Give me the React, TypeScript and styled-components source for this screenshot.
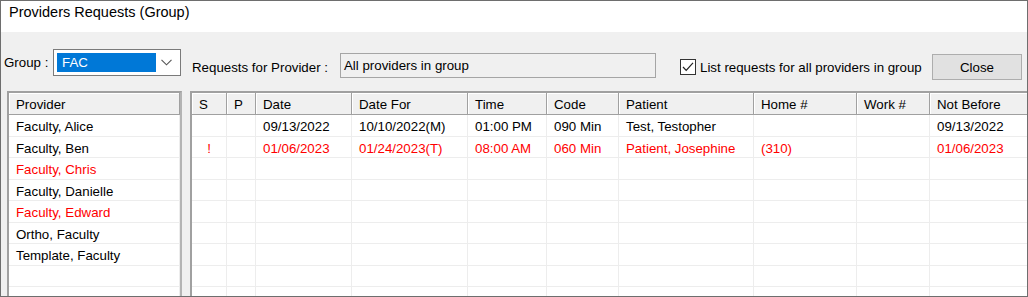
import React from 'react';
import styled, { createGlobalStyle } from 'styled-components';

const Global = createGlobalStyle`
  html, body { margin: 0; padding: 0; background: #f0f0f0; overflow: hidden; }
  body { font-family: "Liberation Sans", Arial, sans-serif; font-size: 13.3px; color: #000; }
  * { box-sizing: border-box; }
`;

const Window = styled.div`
  width: 1028px;
  height: 297px;
  border: 1px solid #6e6e6e;
  background: #f0f0f0;
  display: flex;
  flex-direction: column;
  overflow: hidden;
`;

const TitleBar = styled.div`
  flex: 0 0 31px;
  background: #fff;
  padding: 3px 0 0 8px;
  font-size: 14.5px;
  line-height: 17px;
`;

const Toolbar = styled.div`
  flex: 0 0 59px;
  display: flex;
  align-items: flex-start;
  padding: 17px 5px 0 3px;
`;

const Label = styled.div<{ $top: number; $width?: number; $left?: number }>`
  margin-top: ${(p) => p.$top}px;
  margin-left: ${(p) => p.$left ?? 0}px;
  ${(p) => (p.$width ? `width: ${p.$width}px;` : '')}
  line-height: 16px;
  white-space: nowrap;
`;

const Combo = styled.div`
  width: 128px;
  height: 27px;
  border: 1px solid #7a7a7a;
  background: #fff;
  padding: 3px;
  display: flex;
`;

const ComboValue = styled.div`
  width: 99px;
  height: 19px;
  background: #0078d7;
  color: #fff;
  padding: 1px 0 0 5px;
  line-height: 18px;
`;

const ComboArrow = styled.div`
  flex: 1;
  display: flex;
  align-items: center;
  justify-content: center;
`;

const TextBox = styled.div`
  width: 316px;
  height: 25px;
  margin-top: 4px;
  border: 1px solid #a5a5a5;
  background: #f0f0f0;
  padding: 2px 0 0 3px;
  line-height: 20px;
`;

const CheckBox = styled.div`
  width: 16px;
  height: 16px;
  margin: 10px 0 0 24px;
  border: 1px solid #333;
  background: #fff;
  display: flex;
  align-items: center;
  justify-content: center;
`;

const Button = styled.div`
  width: 90px;
  height: 26px;
  margin: 5px 0 0 auto;
  border: 1px solid #adadad;
  background: #e1e1e1;
  display: flex;
  align-items: center;
  justify-content: center;
`;

const Panels = styled.div`
  flex: 1;
  display: flex;
  gap: 8px;
  padding-left: 6px;
  margin-right: -6px;
  min-height: 0;
`;

const Panel = styled.div<{ $width?: number }>`
  ${(p) => (p.$width ? `flex: 0 0 ${p.$width}px;` : 'flex: 1;')}
  height: 220px;
  border: 2px solid;
  border-color: #a0a0a0 #b4b4b4 #b4b4b4 #a0a0a0;
  background: #fff;
  overflow: hidden;
`;

const Row = styled.div<{ $cols: string; $header?: boolean; $red?: boolean }>`
  display: grid;
  grid-template-columns: ${(p) => p.$cols};
  height: ${(p) => (p.$header ? '22px' : '21.5px')};
  color: ${(p) => (p.$red ? '#ff0000' : '#000')};
`;

const HeadCell = styled.div`
  background: #f0f0f0;
  border-right: 1px solid #a0a0a0;
  border-bottom: 1px solid #a0a0a0;
  box-shadow: inset 1px 1px #ffffff;
  padding: 2px 0 0 7px;
  line-height: 19px;
  white-space: nowrap;
  overflow: hidden;
`;

const Cell = styled.div<{ $center?: boolean }>`
  border-right: 1px solid #ededed;
  border-bottom: 1px solid #ededed;
  padding: 2px 0 0 ${(p) => (p.$center ? 0 : 7)}px;
  text-align: ${(p) => (p.$center ? 'center' : 'left')};
  line-height: 19px;
  white-space: nowrap;
  overflow: hidden;
`;

const gridCols = '35px 29px 96px 116px 79px 72px 135px 103px 73px 100px';
const gridHeads = ['S', 'P', 'Date', 'Date For', 'Time', 'Code', 'Patient', 'Home #', 'Work #', 'Not Before'];

const requests: { cells: string[]; red?: boolean }[] = [
  { cells: ['', '', '09/13/2022', '10/10/2022(M)', '01:00 PM', '090 Min', 'Test, Testopher', '', '', '09/13/2022'] },
  { cells: ['!', '', '01/06/2023', '01/24/2023(T)', '08:00 AM', '060 Min', 'Patient, Josephine', '(310)', '', '01/06/2023'], red: true },
];

const providers: { name: string; red?: boolean }[] = [
  { name: 'Faculty, Alice' },
  { name: 'Faculty, Ben' },
  { name: 'Faculty, Chris', red: true },
  { name: 'Faculty, Danielle' },
  { name: 'Faculty, Edward', red: true },
  { name: 'Ortho, Faculty' },
  { name: 'Template, Faculty' },
];

const TOTAL_ROWS = 9;

export default function App() {
  const providerRows = [...providers];
  while (providerRows.length < TOTAL_ROWS) providerRows.push({ name: '' });
  const requestRows = [...requests];
  while (requestRows.length < TOTAL_ROWS) requestRows.push({ cells: gridHeads.map(() => '') });

  return (
    <>
      <Global />
      <Window>
        <TitleBar>Providers Requests (Group)</TitleBar>
        <Toolbar>
          <Label $top={6} $width={49}>Group :</Label>
          <Combo>
            <ComboValue>FAC</ComboValue>
            <ComboArrow>
              <svg width="11" height="7" viewBox="0 0 11 7">
                <path d="M0.5 0.8 L5.5 5.8 L10.5 0.8" fill="none" stroke="#555" strokeWidth="1.1" />
              </svg>
            </ComboArrow>
          </Combo>
          <Label $top={11} $left={11} $width={148}>Requests for Provider :</Label>
          <TextBox>All providers in group</TextBox>
          <CheckBox>
            <svg width="14" height="14" viewBox="0 0 14 14">
              <path d="M2 7 L5.2 10.4 L12 2.8" fill="none" stroke="#222" strokeWidth="1.2" />
            </svg>
          </CheckBox>
          <Label $top={11} $left={4}>List requests for all providers in group</Label>
          <Button>Close</Button>
        </Toolbar>
        <Panels>
          <Panel $width={175}>
            <Row $cols="1fr" $header>
              <HeadCell>Provider</HeadCell>
            </Row>
            {providerRows.map((p, i) => (
              <Row key={i} $cols="1fr" $red={p.red}>
                <Cell>{p.name}</Cell>
              </Row>
            ))}
          </Panel>
          <Panel>
            <Row $cols={gridCols} $header>
              {gridHeads.map((h) => (
                <HeadCell key={h}>{h}</HeadCell>
              ))}
            </Row>
            {requestRows.map((r, i) => (
              <Row key={i} $cols={gridCols} $red={r.red}>
                {r.cells.map((c, j) => (
                  <Cell key={j} $center={j === 0}>{c}</Cell>
                ))}
              </Row>
            ))}
          </Panel>
        </Panels>
      </Window>
    </>
  );
}
